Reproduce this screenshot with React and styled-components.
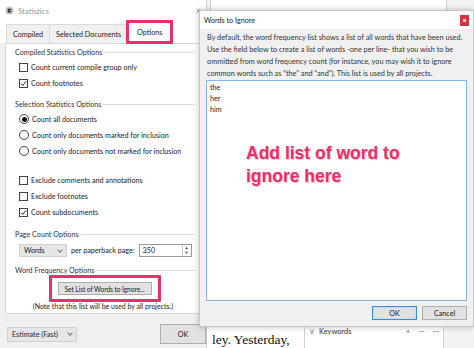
import React from "react";
import styled, { createGlobalStyle } from "styled-components";

const Global = createGlobalStyle`
  html, body { margin: 0; padding: 0; }
  body {
    font-family: Lato, "Open Sans", sans-serif;
    background: #fff;
  }
`;

const PINK = "#ee2d6b";
const UI = "7.2px";

const Desktop = styled.div`
  position: relative;
  width: 474px;
  height: 348px;
  overflow: hidden;
  background: #fff;
`;

/* the app window behind both dialogs */
const BackApp = styled.div`
  position: absolute;
  left: 200px;
  top: 0;
  right: 0;
  bottom: 0;
  display: flex;
  flex-direction: column;
  background: #f3f3f3;
`;

const BackTop = styled.div`
  height: 10px;
  margin: 0 27px 0 10px;
  background: #fff;
  border-left: 1px solid #cfcfcf;
  border-right: 1px solid #cfcfcf;
`;

const BackBody = styled.div`
  flex: 1;
  display: flex;
  align-items: flex-end;
`;

const Manuscript = styled.div`
  width: 95px;
  height: 28px;
  background: #fff;
  padding: 12px 0 0 12px;
  box-sizing: border-box;
  font-family: "Liberation Serif", serif;
  font-size: 13.5px;
  line-height: 16px;
  color: #111;
  white-space: nowrap;
  overflow: hidden;
`;

const Gutter = styled.div`
  width: 9px;
  height: 28px;
  background: #fff;
`;

const KeywordsPanel = styled.div`
  width: 140px;
  height: 24px;
  border: 1px solid #d4d4d4;
  border-bottom: none;
  background: #fff;
  box-sizing: border-box;
`;

const KeywordsHead = styled.div`
  display: flex;
  align-items: center;
  height: 12px;
  padding: 0 4px;
  font-size: 7.5px;
  color: #333;
  gap: 4px;
`;

const KeyTools = styled.span`
  margin-left: auto;
  display: flex;
  gap: 8px;
  color: #777;
  font-size: 8px;
`;

/* statistics window */
const StatsWindow = styled.div`
  position: absolute;
  left: 0;
  top: 0;
  width: 207px;
  height: 348px;
  background: #f0f0f0;
  display: flex;
  flex-direction: column;
  border-right: 1px solid #cfcfcf;
  box-sizing: border-box;
`;

const TitleBar = styled.div`
  height: 21px;
  flex: none;
  display: flex;
  align-items: center;
  padding: 0 5px;
  gap: 4px;
  background: #fff;
  color: #9a9a9a;
  font-size: 7.8px;
`;

const CloseGlyph = styled.span`
  margin-left: auto;
  color: #888;
  font-size: 9px;
`;

const Tabs = styled.div`
  display: flex;
  align-items: flex-end;
  height: 22px;
  padding-left: 7px;
  background: #fff;
`;

const Tab = styled.div`
  position: relative;
  height: ${(p) => (p.$active ? "21px" : "18px")};
  padding: 0 ${(p) => (p.$active ? "9px" : "6px")};
  display: flex;
  align-items: center;
  font-size: ${UI};
  color: #222;
  background: ${(p) => (p.$active ? "#fff" : "#f0f0f0")};
  border: 1px solid #d9d9d9;
  border-bottom: ${(p) => (p.$active ? "1px solid #fff" : "1px solid #d9d9d9")};
  margin-left: -1px;
  margin-bottom: -1px;
  z-index: ${(p) => (p.$active ? 2 : 1)};
`;

const Highlight = styled.div`
  position: absolute;
  left: ${(p) => p.$l}px;
  top: ${(p) => p.$t}px;
  right: ${(p) => p.$r}px;
  bottom: ${(p) => p.$b}px;
  border: 3px solid ${PINK};
  border-radius: 1px;
  pointer-events: none;
`;

const Panel = styled.div`
  margin: 0 6px 0 5px;
  height: 271px;
  background: #fff;
  border: 1px solid #d9d9d9;
  box-sizing: border-box;
  padding: 1px 0 0 9px;
  display: flex;
  flex-direction: column;
`;

const GroupHead = styled.div`
  display: flex;
  align-items: center;
  height: 14px;
  margin-top: ${(p) => p.$mt || 0}px;
  font-size: ${UI};
  color: #333;
  gap: 2px;
  white-space: nowrap;
  &::after {
    content: "";
    flex: 1;
    height: 1px;
    background: #dcdcdc;
    margin-right: 4px;
  }
`;

const OptionRow = styled.div`
  display: flex;
  align-items: center;
  gap: 3px;
  height: ${(p) => p.$h || 17}px;
  padding-left: 4px;
  font-size: ${UI};
  color: #222;
  white-space: nowrap;
`;

const Box = styled.span`
  width: 9px;
  height: 9px;
  flex: none;
  border: 1px solid #444;
  box-sizing: border-box;
  background: #fff;
  display: flex;
  align-items: center;
  justify-content: center;
`;

const Radio = styled.span`
  width: 10px;
  height: 10px;
  flex: none;
  border: 1px solid #444;
  border-radius: 50%;
  box-sizing: border-box;
  display: flex;
  align-items: center;
  justify-content: center;
  &::after {
    content: "";
    width: 5px;
    height: 5px;
    border-radius: 50%;
    background: ${(p) => (p.$on ? "#111" : "transparent")};
  }
`;

const Check = ({ on }) => (
  <Box>
    {on && (
      <svg width="7" height="7" viewBox="0 0 7 7">
        <path d="M0.8 3.6 L2.7 5.5 L6.2 1.2" fill="none" stroke="#222" strokeWidth="1" />
      </svg>
    )}
  </Box>
);

const PageRow = styled.div`
  display: flex;
  align-items: center;
  gap: 4px;
  height: 19px;
  padding-left: 4px;
  font-size: ${UI};
  color: #222;
  white-space: nowrap;
`;

const Select = styled.div`
  width: ${(p) => p.$w}px;
  height: ${(p) => p.$h || 13}px;
  box-sizing: border-box;
  background: #e6e6e6;
  border: 1px solid #d0d0d0;
  display: flex;
  align-items: center;
  padding: 0 4px;
  font-size: ${UI};
  color: #222;
  white-space: nowrap;
  &::after {
    content: "";
    margin-left: auto;
    width: 3px;
    height: 3px;
    border-right: 1px solid #777;
    border-bottom: 1px solid #777;
    transform: translateY(-1px) rotate(45deg);
  }
`;

const NumberBox = styled.div`
  width: 53px;
  height: 13px;
  box-sizing: border-box;
  border: 1px solid #9a9a9a;
  display: flex;
  align-items: center;
  padding-left: 3px;
  font-size: ${UI};
`;

const Spinner = styled.span`
  margin-left: auto;
  width: 8px;
  height: 11px;
  border-left: 1px solid #ccc;
  display: flex;
  flex-direction: column;
  align-items: center;
  justify-content: space-around;
  font-size: 4px;
  line-height: 4px;
  color: #333;
`;

const ButtonWrap = styled.div`
  position: relative;
  align-self: center;
  margin: -2px 0 0 -5px;
  padding: 7px 9px;
`;

const SysButton = styled.div`
  height: ${(p) => p.$h || 13}px;
  width: ${(p) => (p.$w ? p.$w + "px" : "auto")};
  padding: 0;
  box-sizing: border-box;
  background: #e1e1e1;
  border: 1px solid ${(p) => (p.$focus ? "#3c8ae0" : "#adadad")};
  box-shadow: ${(p) => (p.$focus ? "inset 0 0 0 1px #c5dcf5" : "none")};
  display: flex;
  align-items: center;
  justify-content: center;
  font-size: ${(p) => p.$fs || UI};
  letter-spacing: ${(p) => (p.$fs ? "-0.1px" : "normal")};
  color: #222;
  white-space: nowrap;
  flex: none;
`;

const Note = styled.div`
  text-align: center;
  margin: 0 0 0 -8px;
  font-size: 7px;
  color: #222;
`;

const Footer = styled.div`
  flex: 1;
  display: flex;
  align-items: center;
  justify-content: space-between;
  padding: 6px 0 0 7px;
`;

/* words to ignore dialog */
const Dialog = styled.div`
  position: absolute;
  left: 199px;
  top: 10px;
  width: 275px;
  height: 317px;
  background: #f0f0f0;
  border: 1px solid #c8c8c8;
  box-shadow: 0 0 6px rgba(0, 0, 0, 0.25);
  box-sizing: border-box;
  display: flex;
  flex-direction: column;
`;

const DialogTitle = styled.div`
  height: 18px;
  display: flex;
  align-items: center;
  padding: 0 4px;
  background: #fff;
  font-size: ${UI};
  color: #222;
`;

const RedClose = styled.span`
  margin-left: auto;
  width: 9px;
  height: 11px;
  background: #d9323f;
  display: flex;
  align-items: center;
  justify-content: center;
  &::after {
    content: "";
    width: 3px;
    height: 3px;
    background: #f3c0c4;
  }
`;

const DialogBody = styled.div`
  flex: 1;
  display: flex;
  flex-direction: column;
  padding: 3px 6px 6px 6px;
`;

const Intro = styled.p`
  margin: 0 0 0 1px;
  font-size: 7.3px;
  line-height: 12px;
  color: #333;
  white-space: nowrap;
`;

const WordList = styled.div`
  position: relative;
  flex: 1;
  background: #fff;
  border: 1px solid #86b4e3;
  padding: 1px 3px;
  font-size: ${UI};
  line-height: 11px;
  color: #222;
`;

const Callout = styled.div`
  position: absolute;
  left: 39px;
  top: 61px;
  font-family: "Liberation Sans", Arial, sans-serif;
  font-weight: bold;
  font-size: 17.5px;
  line-height: 23px;
  color: ${PINK};
  text-shadow: 1px 1px 1px rgba(0, 0, 0, 0.22);
`;

const DialogButtons = styled.div`
  display: flex;
  justify-content: flex-end;
  gap: 5px;
  margin-top: 5px;
`;

export default function App() {
  return (
    <Desktop>
      <Global />
      <BackApp>
        <BackTop />
        <BackBody>
          <Manuscript>ley. Yesterday,</Manuscript>
          <Gutter />
          <KeywordsPanel>
            <KeywordsHead>
              <span style={{ color: "#888" }}>∨</span>
              <span>Keywords</span>
              <KeyTools>
                <span>+</span>
                <span>—</span>
                <span>···</span>
              </KeyTools>
            </KeywordsHead>
          </KeywordsPanel>
        </BackBody>
      </BackApp>

      <StatsWindow>
        <TitleBar>
          <svg width="9" height="9" viewBox="0 0 10 10">
            <circle cx="5" cy="5" r="4.5" fill="#c9c9c9" />
            <path d="M3 3 h4 v1.6 h-2.4 v1 h2.4 v1.6 h-4 z" fill="#333" />
          </svg>
          <span>Statistics</span>
          <CloseGlyph>×</CloseGlyph>
        </TitleBar>
        <Tabs>
          <Tab>Compiled</Tab>
          <Tab>Selected Documents</Tab>
          <Tab $active>
            Options
            <Highlight $l={-2} $t={-2} $r={-2} $b={-1} />
          </Tab>
        </Tabs>
        <Panel>
          <GroupHead>Compiled Statistics Options</GroupHead>
          <OptionRow $h={16}>
            <Check />
            Count current compile group only
          </OptionRow>
          <OptionRow $h={16}>
            <Check on />
            Count footnotes
          </OptionRow>
          <GroupHead $mt={6}>Selection Statistics Options</GroupHead>
          <OptionRow $h={16}>
            <Radio $on />
            Count all documents
          </OptionRow>
          <OptionRow $h={16}>
            <Radio />
            Count only documents marked for inclusion
          </OptionRow>
          <OptionRow $h={16}>
            <Radio />
            Count only documents not marked for inclusion
          </OptionRow>
          <OptionRow $h={13} />
          <OptionRow $h={16}>
            <Check />
            Exclude comments and annotations
          </OptionRow>
          <OptionRow $h={16}>
            <Check />
            Exclude footnotes
          </OptionRow>
          <OptionRow $h={16}>
            <Check on />
            Count subdocuments
          </OptionRow>
          <GroupHead $mt={7}>Page Count Options</GroupHead>
          <PageRow>
            <Select $w={48}>Words</Select>
            <span>per paperback page:</span>
            <NumberBox>
              350
              <Spinner>
                <span>▲</span>
                <span>▼</span>
              </Spinner>
            </NumberBox>
          </PageRow>
          <GroupHead $mt={3}>Word Frequency Options</GroupHead>
          <ButtonWrap>
            <SysButton $w={94} $fs="6.7px">Set List of Words to Ignore...</SysButton>
            <Highlight $l={0} $t={0} $r={0} $b={0} />
          </ButtonWrap>
          <Note>(Note that this list will be used by all projects.)</Note>
        </Panel>
        <Footer>
          <Select $w={70} $h={15}>Estimate (Fast)</Select>
          <SysButton $w={46} $h={20}>OK</SysButton>
        </Footer>
      </StatsWindow>

      <Dialog>
        <DialogTitle>
          <span>Words to Ignore</span>
          <RedClose />
        </DialogTitle>
        <DialogBody>
          <Intro>
            By default, the word frequency list shows a list of all words that have been used.
            <br />
            Use the field below to create a list of words -one per line- that you wish to be
            <br />
            ommitted from word frequency count (for instance, you may wish it to ignore
            <br />
            common words such as “the” and “and”). This list is used by all projects.
          </Intro>
          <WordList>
            the
            <br />
            her
            <br />
            him
            <Callout>
              Add list of word to
              <br />
              ignore here
            </Callout>
          </WordList>
          <DialogButtons>
            <SysButton $w={45} $h={14} $focus>OK</SysButton>
            <SysButton $w={45} $h={14}>Cancel</SysButton>
          </DialogButtons>
        </DialogBody>
      </Dialog>
    </Desktop>
  );
}
